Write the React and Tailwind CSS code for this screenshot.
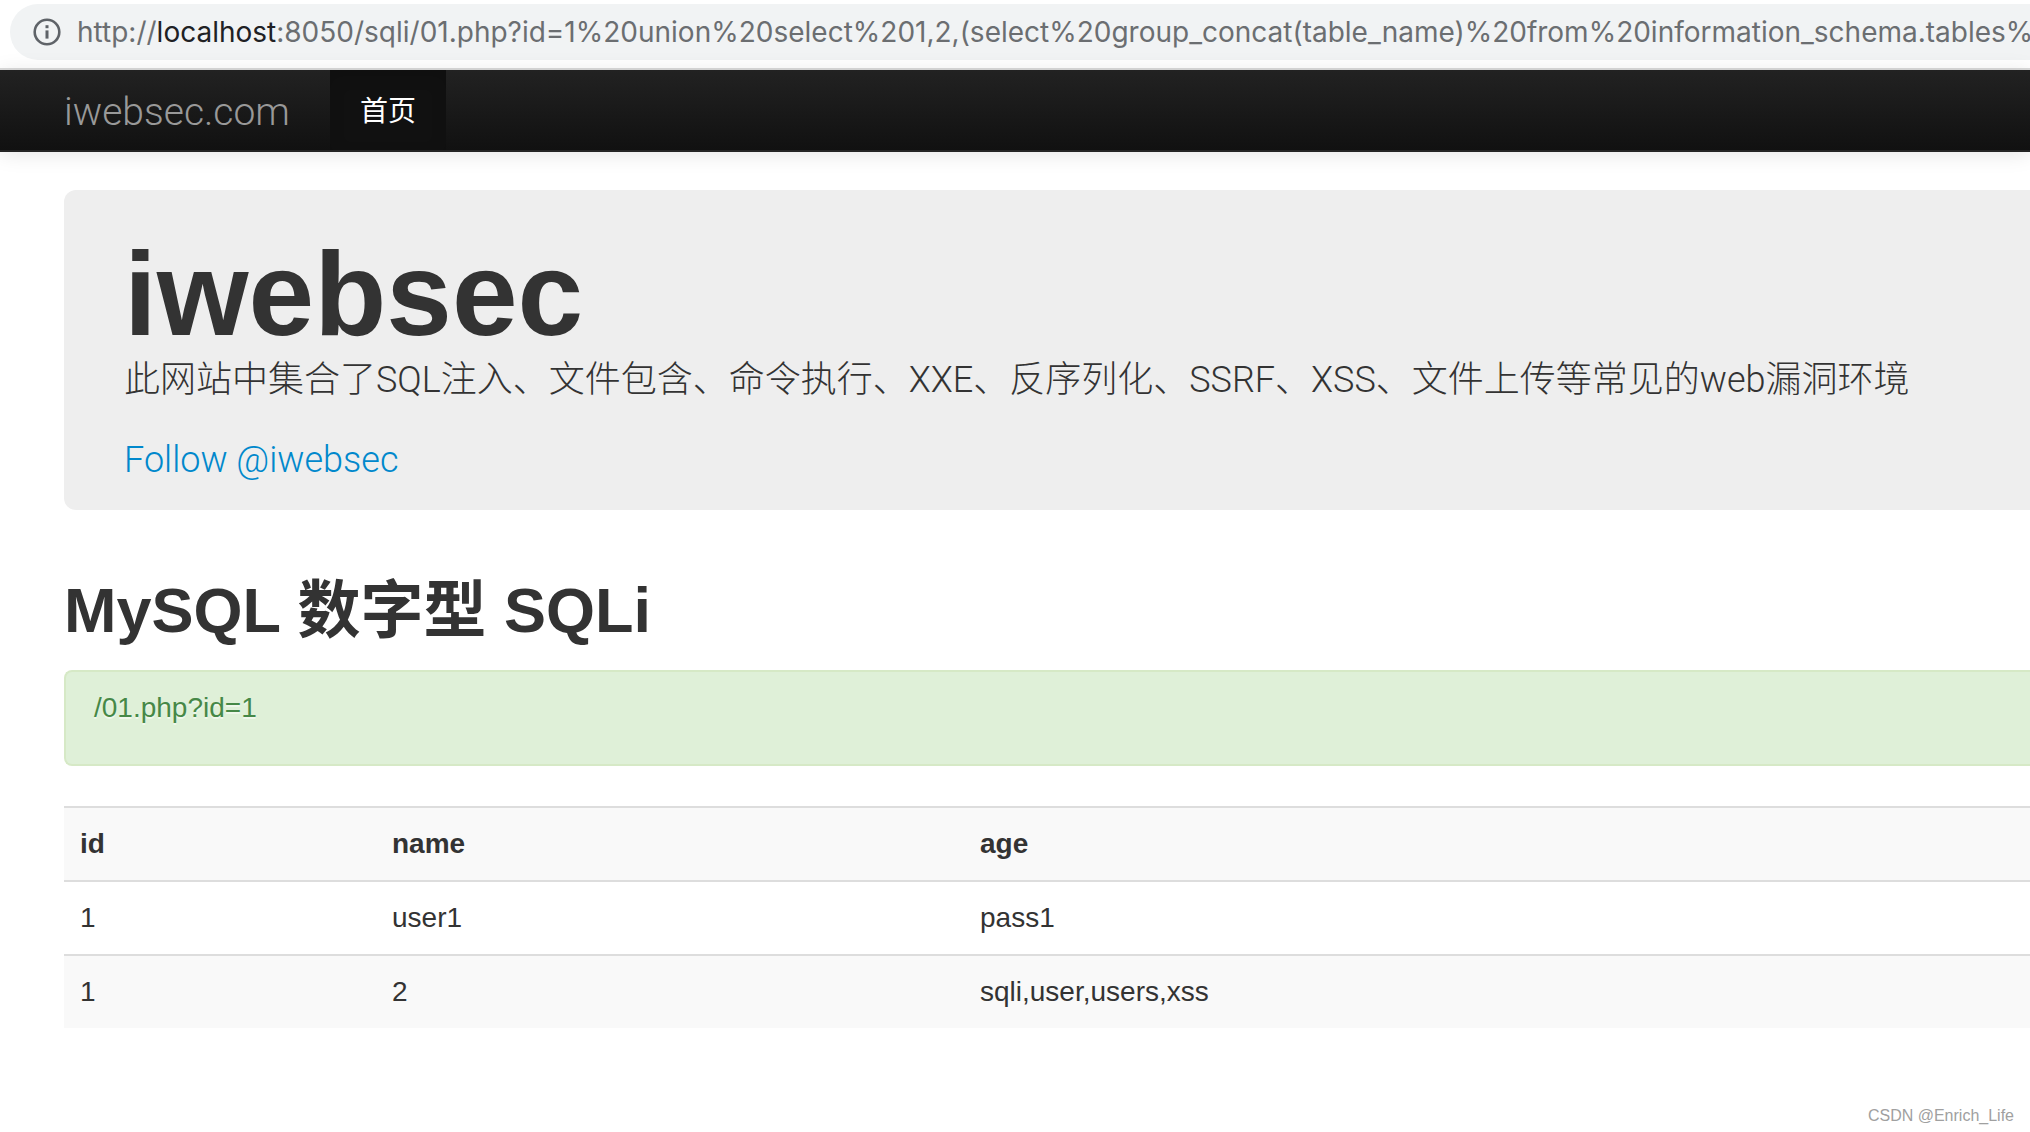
import React from 'react';
import { clsx } from 'clsx';

const columns = ['id', 'name', 'age'];

const rows = [
  { id: '1', name: 'user1', age: 'pass1' },
  { id: '1', name: '2', age: 'sqli,user,users,xss' },
];

const InfoIcon = () => (
  <svg viewBox="0 0 28 28" className="w-7 h-7 shrink-0" fill="none" aria-hidden="true">
    <circle cx="14" cy="14" r="12.3" stroke="#5f6368" strokeWidth="2.6" />
    <rect x="12.5" y="12.4" width="3" height="8.2" fill="#5f6368" />
    <rect x="12.5" y="7.2" width="3" height="3" fill="#5f6368" />
  </svg>
);

const AddressBar = () => (
  <div className="bg-white pt-1 pb-2 pl-[10px] border-b-2 border-[#dadada]">
    <div className="h-14 rounded-l-full bg-[#f1f3f4] flex items-center gap-4 pl-[23px] overflow-hidden">
      <InfoIcon />
      <div className="font-[Inter,sans-serif] text-[28px] leading-10 whitespace-nowrap text-[#6b6e71]">
        http://<span className="text-[#202124]">localhost</span>
        :8050/sqli/01.php?id=1%20union%20select%201,2,(select%20group_concat(table_name)%20from%20information_schema.tables%
      </div>
    </div>
  </div>
);

const Navbar = () => (
  <nav className="relative flex items-stretch h-[82px] pl-16 bg-linear-to-b from-[#222222] to-[#111111] border-b-2 border-[#252525] shadow-[0_2px_20px_rgba(0,0,0,0.1)]">
    <a
      href="#"
      className="flex items-center pt-1 pr-10 font-[Roboto,sans-serif] font-light text-[39px] leading-10 text-[#999999]"
    >
      iwebsec.com
    </a>
    <a
      href="#"
      className="flex items-center pt-1 px-[30px] bg-[#111111] shadow-[inset_0_6px_16px_rgba(0,0,0,0.125)] text-[28px] leading-10 text-white"
    >
      首页
    </a>
  </nav>
);

const Hero = () => (
  <header className="rounded-l-xl bg-[#eeeeee] pl-[60px] pt-12 pb-5 mb-[60px]">
    <h1 className="text-[118px] leading-28 font-bold">iwebsec</h1>
    <div className="font-[Roboto,'Noto_Sans_CJK_SC',sans-serif] font-light text-4xl leading-[60px] whitespace-nowrap">
      <p className="mb-5">
        此网站中集合了SQL注入、文件包含、命令执行、XXE、反序列化、SSRF、XSS、文件上传等常见的web漏洞环境
      </p>
      <a href="#" className="text-[#0088cc]">
        Follow @iwebsec
      </a>
    </div>
  </header>
);

const ResultTable = () => (
  <table className="w-full table-fixed text-left text-[28px] leading-10">
    <colgroup>
      <col className="w-[312px]" />
      <col className="w-[588px]" />
      <col />
    </colgroup>
    <thead>
      <tr className="bg-[#f9f9f9]">
        {columns.map((col) => (
          <th key={col} className="p-4 border-t-2 border-[#dddddd] font-bold">
            {col}
          </th>
        ))}
      </tr>
    </thead>
    <tbody>
      {rows.map((row, i) => (
        <tr key={i} className={clsx(i % 2 === 1 && 'bg-[#f9f9f9]')}>
          {columns.map((col) => (
            <td key={col} className="p-4 border-t-2 border-[#dddddd]">
              {row[col]}
            </td>
          ))}
        </tr>
      ))}
    </tbody>
  </table>
);

const App = () => {
  return (
    <div className="min-h-screen flex flex-col overflow-hidden bg-white text-[#333333] font-['Liberation_Sans','Noto_Sans_CJK_SC',sans-serif]">
      <AddressBar />
      <Navbar />

      <main className="pl-16 pt-[38px]">
        <Hero />
        <h2 className="text-[63px] leading-20 font-bold mb-5">MySQL 数字型 SQLi</h2>
        <div className="rounded-l-lg border-2 border-r-0 border-[#d6e9c6] bg-[#dff0d8] px-7 py-4 mb-10 text-[28px] leading-10 text-[#468847] [text-shadow:0_2px_0_rgba(255,255,255,0.5)]">
          <p className="mb-5">/01.php?id=1</p>
        </div>
        <ResultTable />
      </main>

      <footer className="mt-auto pr-4 pb-1 text-right text-base text-[#a0a0a0]">
        CSDN @Enrich_Life
      </footer>
    </div>
  );
};

export default App;
